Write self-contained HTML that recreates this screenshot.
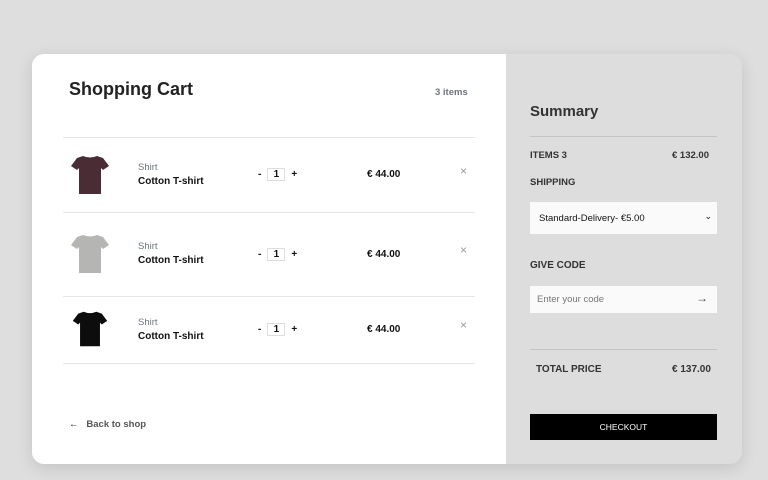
<!DOCTYPE html><html><head><style>
*{box-sizing:border-box;margin:0;padding:0}
body{width:768px;height:480px;background:#dedede;font-family:"Liberation Sans",sans-serif;position:relative;overflow:hidden;color:#111}
.card{position:absolute;left:32px;top:54px;width:710px;height:410px;border-radius:12px;overflow:hidden;box-shadow:0 4px 16px rgba(0,0,0,.12);background:#ddd}
.left{position:absolute;left:0;top:0;width:474px;height:410px;background:#fff}
.a{position:absolute;white-space:nowrap}
.hr{position:absolute;height:1px;background:#e6e6e6}
.b{font-weight:bold}
.g{color:#6c757d}
.qty{display:inline-block;width:18px;height:13px;border:1px solid #ddd;text-align:center;line-height:11px;font-size:10px;font-weight:bold;margin:0 6px}
.x{color:#999;font-size:12px}
</style></head><body>
<div class="card">
<div class="left">
<div class="a b" style="left:37px;top:25px;font-size:18px;color:#222">Shopping Cart</div>
<div class="a b g" style="left:403px;top:33px;font-size:9.5px">3 items</div>
<div class="hr" style="left:31px;top:83px;width:412px"></div>
<div class="hr" style="left:31px;top:158px;width:412px"></div>
<div class="hr" style="left:31px;top:242px;width:412px"></div>
<div class="hr" style="left:31px;top:309px;width:412px"></div>

<svg class="a" style="left:37px;top:100px" width="42" height="42" viewBox="0 0 42 42"><path d="M14 2 L8 4 L2 12 L8 16 L10 14 L10 40 L32 40 L32 14 L34 16 L40 12 L34 4 L28 2 Q21 5 14 2Z" fill="#4a2c35"/></svg>
<svg class="a" style="left:37px;top:179px" width="42" height="42" viewBox="0 0 42 42"><path d="M14 2 L8 4 L2 12 L8 16 L10 14 L10 40 L32 40 L32 14 L34 16 L40 12 L34 4 L28 2 Q21 5 14 2Z" fill="#b5b5b3"/></svg>
<svg class="a" style="left:37px;top:256px" width="42" height="38" viewBox="0 0 42 42"><path d="M14 2 L8 4 L2 12 L8 16 L10 14 L10 40 L32 40 L32 14 L34 16 L40 12 L34 4 L28 2 Q21 5 14 2Z" fill="#0d0d0d"/></svg>

<div class="a g" style="left:106px;top:108px;font-size:9.5px">Shirt</div>
<div class="a b" style="left:106px;top:122px;font-size:10px">Cotton T-shirt</div>
<div class="a b" style="left:226px;top:114px;font-size:10px">-<span class="qty">1</span>+</div>
<div class="a b" style="left:335px;top:115px;font-size:10px">€ 44.00</div>
<div class="a x" style="left:428px;top:110px">×</div>

<div class="a g" style="left:106px;top:187px;font-size:9.5px">Shirt</div>
<div class="a b" style="left:106px;top:201px;font-size:10px">Cotton T-shirt</div>
<div class="a b" style="left:226px;top:194px;font-size:10px">-<span class="qty">1</span>+</div>
<div class="a b" style="left:335px;top:195px;font-size:10px">€ 44.00</div>
<div class="a x" style="left:428px;top:189px">×</div>

<div class="a g" style="left:106px;top:263px;font-size:9.5px">Shirt</div>
<div class="a b" style="left:106px;top:277px;font-size:10px">Cotton T-shirt</div>
<div class="a b" style="left:226px;top:269px;font-size:10px">-<span class="qty">1</span>+</div>
<div class="a b" style="left:335px;top:270px;font-size:10px">€ 44.00</div>
<div class="a x" style="left:428px;top:264px">×</div>

<div class="a b" style="left:37px;top:365px;font-size:9.5px;color:#555"><span style="color:#111">←</span>&nbsp;&nbsp; Back to shop</div>
</div>
<div class="a b" style="left:498px;top:49px;font-size:15px;color:#333">Summary</div>
<div class="hr" style="left:498px;top:82px;width:187px;background:#c4c4c4"></div>
<div class="a b" style="left:498px;top:96px;font-size:9.5px;color:#333">ITEMS 3</div>
<div class="a b" style="left:640px;top:96px;font-size:9.5px;color:#333">€ 132.00</div>
<div class="a b" style="left:498px;top:123px;font-size:9.5px;color:#333">SHIPPING</div>
<div class="a" style="left:498px;top:148px;width:187px;height:32px;background:#fafafa;font-size:9.5px;padding:11px 9px">Standard-Delivery- €5.00<span style="position:absolute;right:5px;top:9px;font-size:9px">⌄</span></div>
<div class="a b" style="left:498px;top:206px;font-size:10px;color:#333">GIVE CODE</div>
<div class="a" style="left:498px;top:232px;width:187px;height:27px;background:#fafafa;font-size:9.5px;padding:8px 7px;color:#777">Enter your code<span style="position:absolute;right:9px;top:5px;font-size:12px;color:#444">→</span></div>
<div class="hr" style="left:498px;top:295px;width:187px;background:#c4c4c4"></div>
<div class="a b" style="left:504px;top:310px;font-size:10px;color:#333">TOTAL PRICE</div>
<div class="a b" style="left:640px;top:310px;font-size:10px;color:#333">€ 137.00</div>
<div class="a" style="left:498px;top:360px;width:187px;height:26px;background:#000;color:#fff;font-size:8.5px;text-align:center;line-height:26px">CHECKOUT</div>
</div>
</body></html>
